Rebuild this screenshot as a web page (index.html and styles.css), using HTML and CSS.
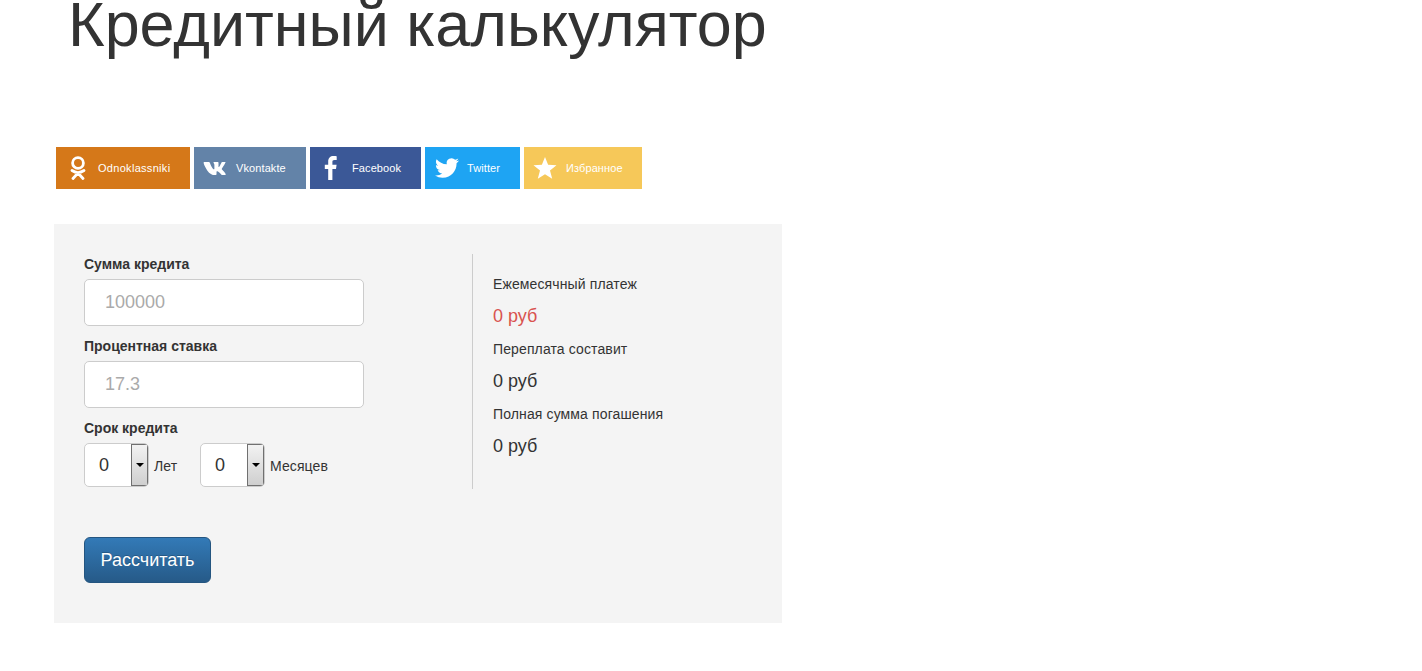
FILE: index.html
```html
<!DOCTYPE html>
<html lang="ru">
<head>
    <meta charset="UTF-8">
    <title>Кредитный калькулятор</title>
    <link rel="stylesheet" href="styles.css">
</head>
<body>
    <div class="container">
        <h1>Кредитный калькулятор</h1>

        <div class="share">
            <a href="#" class="share-btn share-ok">
                <svg class="share-icon" viewBox="0 0 16 24" width="16" height="24">
                    <circle cx="8" cy="7" r="5.4" fill="none" stroke="#fff" stroke-width="2.8"/>
                    <path d="M2 14.500c3.800 2.600 8.200 2.600 12 0M8 17l-5 5.500M8 17l5 5.500" fill="none" stroke="#fff" stroke-width="2.800" stroke-linecap="round"/>
                </svg>
                <span>Odnoklassniki</span>
            </a>
            <a href="#" class="share-btn share-vk">
                <svg class="share-icon" viewBox="0 0 576 512" width="24" height="21">
                    <path fill="#fff" d="M545 117.7c3.7-12.5 0-21.7-17.8-21.7h-58.9c-15 0-21.9 8.2-25.6 21.7 0 0-29.4 72.4-50.6 95.5-6.9 6.9-10 9-13.8 9-1.9 0-4.6-2.2-4.6-14.7V117.7c0-15-4.2-21.7-16.6-21.7h-92.6c-9.4 0-15 7-15 13.5 0 14.2 21.2 17.5 23.4 57.5v86.8c0 19-3.4 22.5-10.9 22.5-20 0-68.6-73.4-97.4-157.4-5.8-16.3-11.5-22.9-26.6-22.9H30.5C13.7 96 10.3 103.9 10.3 112.7c0 15.6 20 93.1 93.1 195.5C152.2 378.1 221 416 283.5 416c37.5 0 42.1-8.4 42.1-22.9 0-66.8-3.4-73.1 15.4-73.1 8.7 0 23.7 4.4 58.7 38.1 40 40 46.6 57.9 69 57.9h58.9c16.8 0 25.3-8.4 20.4-25-11.2-34.9-86.9-106.7-90.3-111.5-8.7-11.2-6.2-16.2 0-26.2.1-.1 72-101.3 79.4-135.6z"/>
                </svg>
                <span>Vkontakte</span>
            </a>
            <a href="#" class="share-btn share-fb">
                <svg class="share-icon" viewBox="0 0 14 24" width="14" height="24">
                    <path fill="#fff" d="M4.2 24V13H.8V8.800h3.400V5.600C4.200 2 6.300 0 9.500 0c1.500 0 2.800.1 3.200.2V4h-2.200C8.700 4 8.400 4.900 8.400 6.100v2.700h4.200L12 13H8.400v11z"/>
                </svg>
                <span>Facebook</span>
            </a>
            <a href="#" class="share-btn share-tw">
                <svg class="share-icon" viewBox="0 0 24 24" width="24" height="24">
                    <path fill="#fff" d="M23.953 4.57a10 10 0 01-2.825.775 4.958 4.958 0 002.163-2.723c-.951.555-2.005.959-3.127 1.184a4.92 4.92 0 00-8.384 4.482C7.69 8.095 4.067 6.13 1.64 3.162a4.822 4.822 0 00-.666 2.475c0 1.71.87 3.213 2.188 4.096a4.904 4.904 0 01-2.228-.616v.06a4.923 4.923 0 003.946 4.827 4.996 4.996 0 01-2.212.085 4.936 4.936 0 004.604 3.417 9.867 9.867 0 01-6.102 2.105c-.39 0-.779-.023-1.17-.067a13.995 13.995 0 007.557 2.209c9.053 0 13.998-7.496 13.998-13.985 0-.21 0-.42-.015-.63A9.935 9.935 0 0024 4.59z"/>
                </svg>
                <span>Twitter</span>
            </a>
            <a href="#" class="share-btn share-fav">
                <svg class="share-icon" viewBox="0 0 24 24" width="24" height="24">
                    <path fill="#fff" d="M12 1l3.100 7.800 8.400.5-6.500 5.300 2.200 8.200-7.200-4.600-7.200 4.600 2.200-8.200L.500 9.300l8.400-.5z"/>
                </svg>
                <span>Избранное</span>
            </a>
        </div>

        <div class="calc">
            <div class="calc-row">
                <form class="calc-form">
                    <div class="form-group">
                        <label for="summa">Сумма кредита</label>
                        <input type="text" id="summa" class="form-input" placeholder="100000">
                    </div>
                    <div class="form-group">
                        <label for="stavka">Процентная ставка</label>
                        <input type="text" id="stavka" class="form-input" placeholder="17.3">
                    </div>
                    <div class="form-group">
                        <label>Срок кредита</label>
                        <div class="term">
                            <div class="spin">
                                <span class="spin-value">0</span>
                                <span class="spin-arrow"></span>
                            </div>
                            <span class="term-unit term-unit-years">Лет</span>
                            <div class="spin">
                                <span class="spin-value">0</span>
                                <span class="spin-arrow"></span>
                            </div>
                            <span class="term-unit">Месяцев</span>
                        </div>
                    </div>
                </form>
                <div class="calc-result">
                    <p class="result-label">Ежемесячный платеж</p>
                    <p class="result-value result-red">0 руб</p>
                    <p class="result-label">Переплата составит</p>
                    <p class="result-value">0 руб</p>
                    <p class="result-label">Полная сумма погашения</p>
                    <p class="result-value">0 руб</p>
                </div>
            </div>
            <button type="button" class="btn-calc">Рассчитать</button>
        </div>
    </div>
</body>
</html>
```

FILE: styles.css
```css
body {
    margin: 0;
    background-color: #fff;
    font-family: 'Liberation Sans', Arial, sans-serif;
    font-size: 14px;
    line-height: 20px;
    color: #333;
}

.container {
    width: 728px;
    margin-left: 54px;
}

h1 {
    margin: -10px 0 0 14px;
    font-size: 62.9px;
    font-weight: normal;
    line-height: 69px;
    color: #333;
}

.share {
    display: flex;
    gap: 4px;
    margin: 88px 0 35px 2px;
}

.share-btn {
    display: flex;
    align-items: center;
    height: 42px;
    padding-left: 10px;
    box-sizing: border-box;
    color: #fff;
    font-size: 11px;
    letter-spacing: 0.1px;
    text-decoration: none;
}

.share-icon {
    flex: none;
}

.share-ok {
    width: 134px;
    background-color: #d57819;
    letter-spacing: 0.3px;
}

.share-ok span {
    margin-left: 12px;
}

.share-ok .share-icon {
    margin-left: 4px;
}

.share-vk {
    width: 112px;
    background-color: #6383a8;
}

.share-vk span {
    margin-left: 9px;
}

.share-vk .share-icon {
    margin-left: -1px;
}

.share-fb {
    width: 111px;
    background-color: #3b5897;
}

.share-fb span {
    margin-left: 14px;
}

.share-fb .share-icon {
    margin-left: 4px;
}

.share-tw {
    width: 95px;
    background-color: #1ea4f3;
}

.share-tw span {
    margin-left: 8px;
}

.share-fav {
    width: 118px;
    background-color: #f6c859;
}

.share-fav span {
    margin-left: 9px;
}

.share-fav .share-icon {
    margin-left: -1px;
}

.calc {
    height: 399px;
    padding: 30px;
    box-sizing: border-box;
    background-color: #f4f4f4;
}

.calc-row {
    display: flex;
}

.calc-form {
    width: 388px;
}

.form-group {
    margin-bottom: 10px;
}

.form-group:last-child {
    margin-bottom: 2px;
}

label {
    display: block;
    margin-bottom: 5px;
    font-weight: bold;
}

.form-input {
    display: block;
    width: 280px;
    height: 47px;
    padding: 0 20px;
    box-sizing: border-box;
    border: 1px solid #ccc;
    border-radius: 5px;
    background-color: #fff;
    font-family: inherit;
    font-size: 18px;
    color: #333;
}

.form-input::placeholder {
    color: #aaa;
    opacity: 1;
}

.term {
    display: flex;
    align-items: center;
}

.spin {
    display: flex;
    width: 65px;
    height: 44px;
    box-sizing: border-box;
    border: 1px solid #ccc;
    border-radius: 5px;
    background-color: #fff;
    overflow: hidden;
}

.spin-value {
    flex: 1;
    padding-left: 14px;
    font-size: 18px;
    line-height: 42px;
}

.spin-arrow {
    display: flex;
    align-items: center;
    justify-content: center;
    width: 17px;
    box-sizing: border-box;
    border: 1px solid #707070;
    background: linear-gradient(to bottom, #f2f2f2, #cfcfcf);
}

.spin-arrow::after {
    content: "";
    border-style: solid;
    border-width: 4px 4px 0;
    border-color: #000 transparent transparent;
}

.term-unit {
    margin-left: 5px;
    padding-top: 2px;
    letter-spacing: 0.1px;
}

.term-unit-years {
    width: 46px;
}

.calc-result {
    width: 262px;
    height: 235px;
    padding: 20px 0 0 20px;
    box-sizing: border-box;
    border-left: 1px solid #ccc;
}

.result-label {
    margin: 0;
    letter-spacing: 0.12px;
}

.result-value {
    margin: 12px 0 13px;
    font-size: 18px;
}

.result-red {
    color: #d9534f;
}

.btn-calc {
    display: block;
    width: 127px;
    height: 46px;
    margin-top: 48px;
    padding: 0;
    border: 1px solid #245580;
    border-radius: 6px;
    background: linear-gradient(to bottom, #337ab7, #265a88);
    color: #fff;
    font-family: inherit;
    font-size: 18px;
    text-shadow: 0 -1px 0 rgba(0, 0, 0, 0.2);
    cursor: pointer;
}
```
